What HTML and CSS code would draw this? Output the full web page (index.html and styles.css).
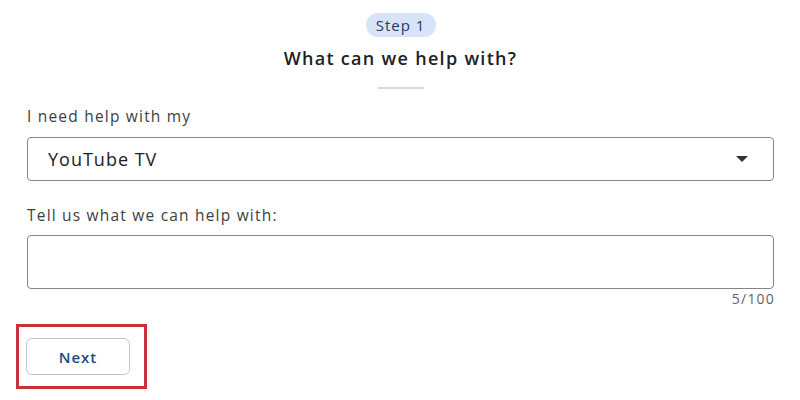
FILE: index.html
```html
<!DOCTYPE html>
<html>
<head>
<meta charset="utf-8">
<link rel="stylesheet" href="styles.css">
</head>
<body>
<div class="page">
  <div class="header">
    <span class="chip">Step 1</span>
    <h1 class="title">What can we help with?</h1>
    <div class="divider"></div>
  </div>
  <label class="label label-first">I need help with my</label>
  <div class="select">
    <span class="select-value">YouTube TV</span>
    <svg class="caret" width="12" height="6" viewBox="0 0 12 6"><path d="M0 0 L12 0 L6 6 Z" fill="#333"/></svg>
  </div>
  <label class="label label-second">Tell us what we can help with:</label>
  <div class="textarea"></div>
  <div class="counter">5/100</div>
  <div class="highlight">
    <button class="next">Next</button>
  </div>
</div>
</body>
</html>
```

FILE: styles.css
```css
html, body {
  margin: 0;
  padding: 0;
  background: #fff;
}
body {
  font-family: "Open Sans", "Noto Sans", sans-serif;
  color: #202124;
}
.page {
  width: 800px;
  height: 400px;
  box-sizing: border-box;
  padding: 13px 26px 0 27px;
  display: flex;
  flex-direction: column;
  align-items: stretch;
}
.header {
  display: flex;
  flex-direction: column;
  align-items: center;
}
.chip {
  display: inline-flex;
  align-items: center;
  justify-content: center;
  width: 70px;
  height: 24px;
  border-radius: 12px;
  background: #d6e3f8;
  color: #1f3a5f;
  font-size: 15px;
  letter-spacing: 1px;
}
.title {
  margin: 10px 0 0;
  font-size: 18px;
  font-weight: 600;
  line-height: 22px;
  letter-spacing: 1.3px;
  color: #202124;
}
.divider {
  margin-top: 18px;
  width: 46px;
  height: 2px;
  background: #dadada;
}
.label {
  font-size: 15.5px;
  line-height: 18px;
  color: #3c4043;
  letter-spacing: 1.2px;
}
.label-first {
  margin-top: 18px;
}
.label-second {
  margin-top: 25px;
}
.select {
  margin-top: 12px;
  height: 44px;
  box-sizing: border-box;
  border: 1px solid #80868b;
  border-radius: 4px;
  display: flex;
  align-items: center;
  justify-content: space-between;
  padding: 0 25px 0 20px;
}
.select-value {
  font-size: 18px;
  color: #202124;
  letter-spacing: 1px;
}
.caret {
  display: block;
}
.textarea {
  margin-top: 11px;
  height: 54px;
  box-sizing: border-box;
  border: 1px solid #80868b;
  border-radius: 4px;
}
.counter {
  margin-top: 1px;
  align-self: flex-end;
  font-size: 14px;
  line-height: 18px;
  color: #5f6368;
  letter-spacing: 1.2px;
  margin-right: -1px;
}
.highlight {
  margin: 16px 0 0 -11px;
  width: 131px;
  height: 65px;
  box-sizing: border-box;
  border: 3px solid #c5323a;
  display: flex;
  align-items: center;
  padding-left: 7px;
}
.next {
  width: 104px;
  height: 37px;
  border: 1px solid #c4c7c5;
  border-radius: 6px;
  background: #fff;
  color: #1a4a85;
  font-family: "Open Sans", "Noto Sans", sans-serif;
  font-size: 15px;
  font-weight: 600;
  letter-spacing: 1px;
  padding: 0;
}
```
